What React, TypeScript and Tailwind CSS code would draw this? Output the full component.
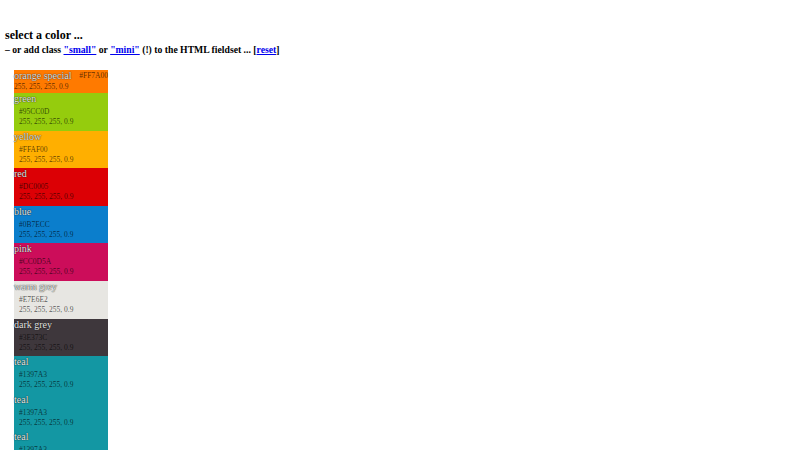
const swatches = [
  { name: 'green', hex: '#95CC0D', bg: 'bg-[#95CC0D]' },
  { name: 'yellow', hex: '#FFAF00', bg: 'bg-[#FFAF00]' },
  { name: 'red', hex: '#DC0005', bg: 'bg-[#DC0005]' },
  { name: 'blue', hex: '#0B7ECC', bg: 'bg-[#0B7ECC]' },
  { name: 'pink', hex: '#CC0D5A', bg: 'bg-[#CC0D5A]' },
  { name: 'warm grey', hex: '#E7E6E2', bg: 'bg-[#E7E6E2]' },
  { name: 'dark grey', hex: '#3E373C', bg: 'bg-[#3E373C]' },
  { name: 'teal', hex: '#1397A3', bg: 'bg-[#1397A3]' },
  { name: 'teal', hex: '#1397A3', bg: 'bg-[#1397A3]' },
  { name: 'teal', hex: '#1397A3', bg: 'bg-[#1397A3]' },
];

const label = 'text-[10px] leading-[12px] text-white/90 [text-shadow:0_0_1px_rgba(0,0,0,0.9),0_0_1px_rgba(0,0,0,0.6)]';
const small = 'text-[7.5px] leading-[10px] text-black/65';

export default function App() {
  return (
    <div className="h-[450px] overflow-hidden bg-white font-['Liberation_Serif',serif] text-black">
      <div className="pt-[28px] pl-[5px]">
        <h3 className="text-[12px] leading-[15px] font-bold">select a color ...</h3>
        <p className="text-[9.7px] leading-[13px] font-bold">
          – or add class <a className="text-[#0000EE] underline">"small"</a> or{' '}
          <a className="text-[#0000EE] underline">"mini"</a> (!) to the HTML fieldset ... [
          <a className="text-[#0000EE] underline">reset</a>]
        </p>
      </div>

      <div className="mt-[14px] ml-[14px] w-[94px] flex flex-col">
        {/* first one sits inline */}
        <div className="bg-[#FF7A00] h-[23px]">
          <div className="flex items-center justify-between">
            <span className={label}>orange special</span>
            <span className={small}>#FF7A00</span>
          </div>
          <div className={small}>255, 255, 255, 0.9</div>
        </div>

        {swatches.map((s, i) => (
          <div key={i} className={`${s.bg} h-[37.6px]`}>
            <div className={label}>{s.name}</div>
            <div className={`pl-[5px] pt-[2px] ${small}`}>
              <div>{s.hex}</div>
              <div>255, 255, 255, 0.9</div>
            </div>
          </div>
        ))}
      </div>
    </div>
  );
}
